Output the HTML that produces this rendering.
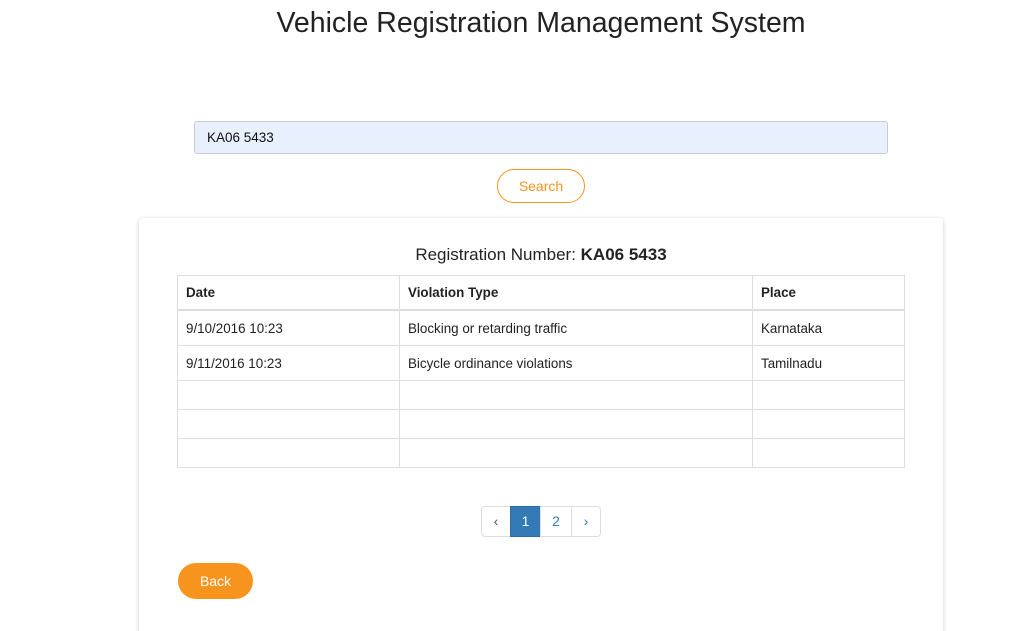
<!DOCTYPE html>
<html><head><style>
html,body{margin:0;width:1024px;height:631px;overflow:hidden}
body{background:#fff;font-family:"Liberation Sans",Arial,sans-serif;position:relative;color:#222}
.a{position:absolute}
h1{position:absolute;left:0;width:1082px;top:7px;margin:0;text-align:center;font-weight:normal;font-size:28.5px;color:#222}
.inp{left:194px;top:121px;background:#e8f0fe;border:1px solid #c8ccd2;border-radius:3px;font-size:13.5px;line-height:31px;padding-left:12px;box-sizing:border-box;width:694px;height:33px;color:#111}
.srch{left:497px;top:169px;width:88px;height:34px;box-sizing:border-box;border:1px solid #f7941d;border-radius:17px;color:#f7941d;font-size:14px;text-align:center;line-height:32px}
.card{left:139px;top:218px;width:804px;height:430px;border-radius:4px;box-shadow:0 1px 5px rgba(0,0,0,.2);background:#fff}
.reg{left:139px;width:804px;top:245px;text-align:center;font-size:17px;color:#222}
table{position:absolute;left:177px;top:275px;border-collapse:collapse;font-size:13.4px;width:728px}
td,th{border:1px solid #ddd;padding:0 8px;text-align:left;color:#222}
th{height:33px;font-weight:bold;border-bottom:2px solid #ddd}
tr.r td{height:34px}
tr.e td{height:28px}
.pg{top:506px;height:31px;box-sizing:border-box;border:1px solid #ddd;text-align:center;line-height:29px;font-size:14px;color:#337ab7}
.back{left:178px;top:563px;width:75px;height:36px;border-radius:18px;background:#f7941d;color:#fff;font-size:14px;text-align:center;line-height:36px}
</style></head><body>
<h1>Vehicle Registration Management System</h1>
<div class="a inp">KA06 5433</div>
<div class="a srch">Search</div>
<div class="a card"></div>
<div class="a reg">Registration Number: <b>KA06 5433</b></div>
<table>
<tr><th style="width:205px">Date</th><th style="width:336px">Violation Type</th><th>Place</th></tr>
<tr class="r"><td>9/10/2016 10:23</td><td>Blocking or retarding traffic</td><td>Karnataka</td></tr>
<tr class="r"><td>9/11/2016 10:23</td><td>Bicycle ordinance violations</td><td>Tamilnadu</td></tr>
<tr class="e"><td></td><td></td><td></td></tr>
<tr class="e"><td></td><td></td><td></td></tr>
<tr class="e"><td></td><td></td><td></td></tr>
</table>
<div class="a pg" style="left:481px;width:30px;border-radius:4px 0 0 4px;color:#555">&#8249;</div>
<div class="a pg" style="left:510px;width:31px;background:#337ab7;border-color:#2e6da4;color:#fff">1</div>
<div class="a pg" style="left:540px;width:32px">2</div>
<div class="a pg" style="left:571px;width:30px;border-radius:0 4px 4px 0">&#8250;</div>
<div class="a back">Back</div>
</body></html>
